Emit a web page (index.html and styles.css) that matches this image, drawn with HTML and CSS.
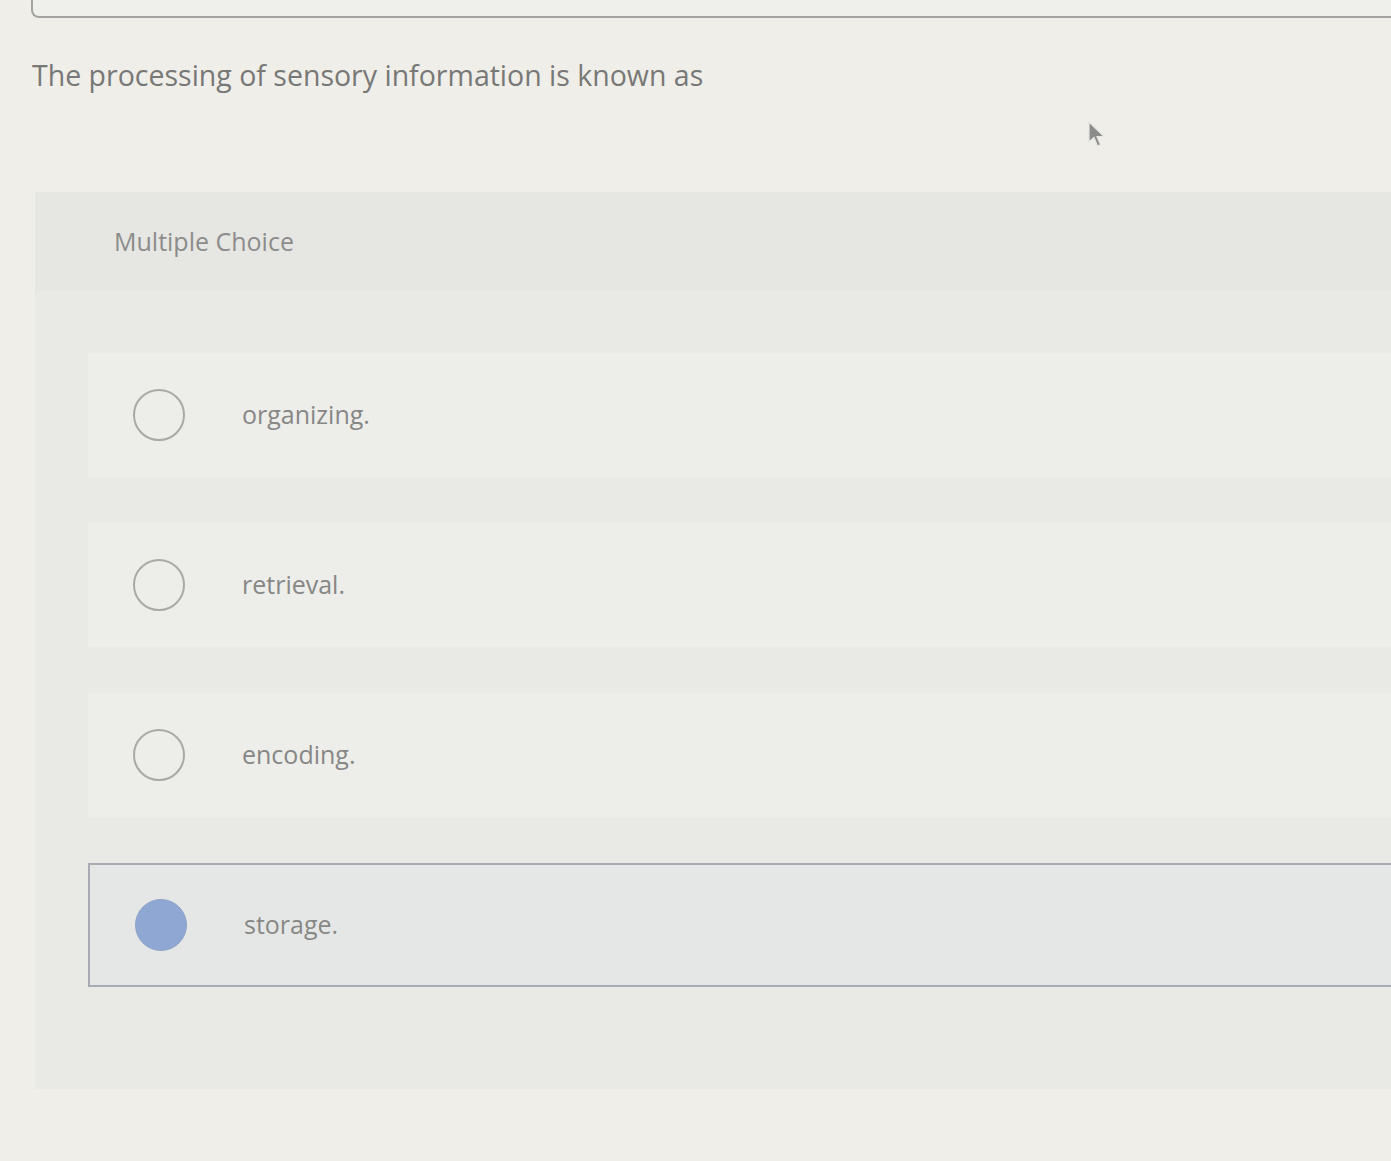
FILE: index.html
```html
<!DOCTYPE html>
<html>
<head>
<meta charset="utf-8">
<link rel="stylesheet" href="styles.css">
</head>
<body>
<div class="page">
  <div class="topbox"></div>
  <h1 class="question">The processing of sensory information is known as</h1>
  <section class="panel">
    <div class="panel-head">Multiple Choice</div>
    <div class="options">
      <div class="option"><span class="radio"></span><span class="label">organizing.</span></div>
      <div class="option"><span class="radio"></span><span class="label">retrieval.</span></div>
      <div class="option"><span class="radio"></span><span class="label">encoding.</span></div>
      <div class="option selected"><span class="radio"></span><span class="label">storage.</span></div>
    </div>
  </section>
  <svg class="cursor" width="20" height="28" viewBox="0 0 20 28"><path d="M2 1 L2 21 L7 16.5 L10.5 25 L13.5 23.7 L10 15.5 L17 15.5 Z" fill="#8c8c8a" stroke="#e6e6e2" stroke-width="1.2"/></svg>
</div>
</body>
</html>
```

FILE: styles.css
```css
html, body {
  margin: 0;
  padding: 0;
  background: #efeee9;
  overflow: hidden;
}
.page {
  position: relative;
  display: flow-root;
  width: 1391px;
  height: 1161px;
  font-family: "Open Sans", "Lato", sans-serif;
}
.topbox {
  margin-left: 31px;
  height: 16px;
  border-left: 2px solid #a3a3a1;
  border-bottom: 2px solid #a3a3a1;
  border-radius: 0 0 0 8px;
  background: #efefec;
}
.question {
  margin: 39px 0 0 32px;
  font-size: 28.5px;
  font-weight: 400;
  color: #787876;
  line-height: 36px;
  letter-spacing: 0;
}
.panel {
  margin: 99px 0 0 35px;
  height: 897px;
  background: #e9e9e6;
}
.panel-head {
  height: 99px;
  padding-left: 79px;
  display: flex;
  align-items: center;
  font-size: 25px;
  color: #8c8c8a;
  background: #e6e6e3;
  box-sizing: border-box;
  padding-bottom: 2px;
}
.options {
  display: flex;
  flex-direction: column;
  gap: 46px;
  padding: 62px 0 0 53px;
}
.option {
  height: 124px;
  display: flex;
  align-items: center;
  padding-left: 45px;
  background: #ededea;
  box-sizing: border-box;
}
.radio {
  width: 48px;
  height: 48px;
  border: 2px solid #a9a9a8;
  border-radius: 50%;
  flex: none;
}
.label {
  margin-left: 57px;
  font-size: 25px;
  color: #878785;
  padding-bottom: 2px;
}
.selected {
  border: 2px solid #a8acb2;
  border-right: none;
  background: #e5e7e6;
  padding-left: 45px;
}
.selected .radio {
  background: #8fa7d3;
  border-color: #8fa3c8;
  width: 50px;
  height: 50px;
  border-width: 1px;
}
.cursor {
  position: absolute;
  left: 1087px;
  top: 121px;
}
```
